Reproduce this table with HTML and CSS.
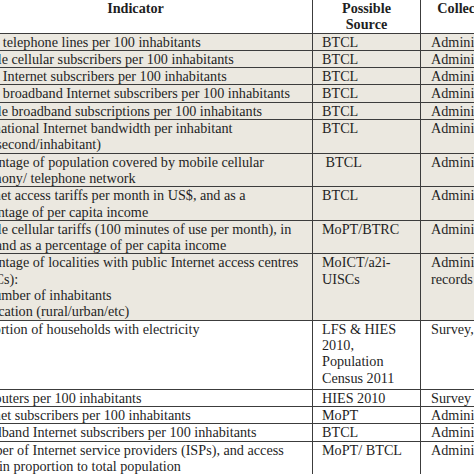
FILE: index.html
```html
<!DOCTYPE html>
<html>
<head>
<meta charset="utf-8">
<link rel="stylesheet" href="styles.css">
</head>
<body>
<table class="ind-table">
  <colgroup>
    <col class="c-ind">
    <col class="c-src">
    <col class="c-col">
  </colgroup>
  <thead>
    <tr class="head">
      <th>Indicator</th>
      <th>Possible<br>Source</th>
      <th>Collection Method</th>
    </tr>
  </thead>
  <tbody>
    <tr class="shade"><td>Fixed telephone lines per 100 inhabitants</td><td>BTCL</td><td>Administrative</td></tr>
    <tr class="shade"><td>Mobile cellular subscribers per 100 inhabitants</td><td>BTCL</td><td>Administrative</td></tr>
    <tr class="shade"><td>Fixed Internet subscribers per 100 inhabitants</td><td>BTCL</td><td>Administrative</td></tr>
    <tr class="shade"><td>Fixed broadband Internet subscribers per 100 inhabitants</td><td>BTCL</td><td>Administrative</td></tr>
    <tr class="shade"><td>Mobile broadband subscriptions per 100 inhabitants</td><td>BTCL</td><td>Administrative</td></tr>
    <tr class="shade"><td>International Internet bandwidth per inhabitant<br>(bits/second/inhabitant)</td><td>BTCL</td><td>Administrative</td></tr>
    <tr class="shade"><td>Percentage of population covered by mobile cellular<br>telephony/ telephone network</td><td>&nbsp;BTCL</td><td>Administrative</td></tr>
    <tr class="shade"><td>Internet access tariffs per month in US$, and as a<br>percentage of per capita income</td><td>BTCL</td><td>Administrative</td></tr>
    <tr class="shade"><td>Mobile cellular tariffs (100 minutes of use per month), in<br>US$ and as a percentage of per capita income</td><td>MoPT/BTRC</td><td>Administrative</td></tr>
    <tr class="shade"><td>Percentage of localities with public Internet access centres<br>(PIACs):<br>By number of inhabitants<br>By location (rural/urban/etc)</td><td>MoICT/a2i-<br>UISCs</td><td>Administrative<br>records</td></tr>
    <tr class="tall"><td>Proportion of households with electricity</td><td>LFS &amp; HIES<br>2010,<br>Population<br>Census 2011</td><td>Survey, Census</td></tr>
    <tr><td>Computers per 100 inhabitants</td><td>HIES 2010</td><td>Survey</td></tr>
    <tr><td>Internet subscribers per 100 inhabitants</td><td>MoPT</td><td>Administrative</td></tr>
    <tr><td>Broadband Internet subscribers per 100 inhabitants</td><td>BTCL</td><td>Administrative</td></tr>
    <tr><td>Number of Internet service providers (ISPs), and access<br>price in proportion to total population</td><td>MoPT/ BTCL</td><td>Administrative</td></tr>
  </tbody>
</table>
</body>
</html>
```

FILE: styles.css
```css
html, body {
  margin: 0;
  padding: 0;
  background: #ffffff;
  overflow: hidden;
}

body {
  width: 474px;
  height: 474px;
}

.ind-table {
  border-collapse: collapse;
  margin-left: -42px;
  margin-top: -1px;
  font-family: "Liberation Serif", "Times New Roman", serif;
  font-size: 14.2px;
  line-height: 16.3px;
  color: #1f1f1f;
  table-layout: fixed;
  width: 608px;
}

.c-ind { width: 354px; }
.c-src { width: 108px; }
.c-col { width: 146px; }

.ind-table th,
.ind-table td {
  border: 1px solid #3c3c3c;
  padding: 0 6px 0 8px;
  vertical-align: top;
  text-align: left;
  white-space: nowrap;
}

.ind-table td:nth-child(2) {
  padding-left: 9px;
}

.ind-table td:nth-child(3) {
  padding-left: 10px;
}

.ind-table th {
  font-weight: bold;
  text-align: center;
  padding: 0 4px;
  background: #ffffff;
}

.shade td {
  background: #ebe8e0;
}

.tall td {
  padding-bottom: 3px;
}
```
